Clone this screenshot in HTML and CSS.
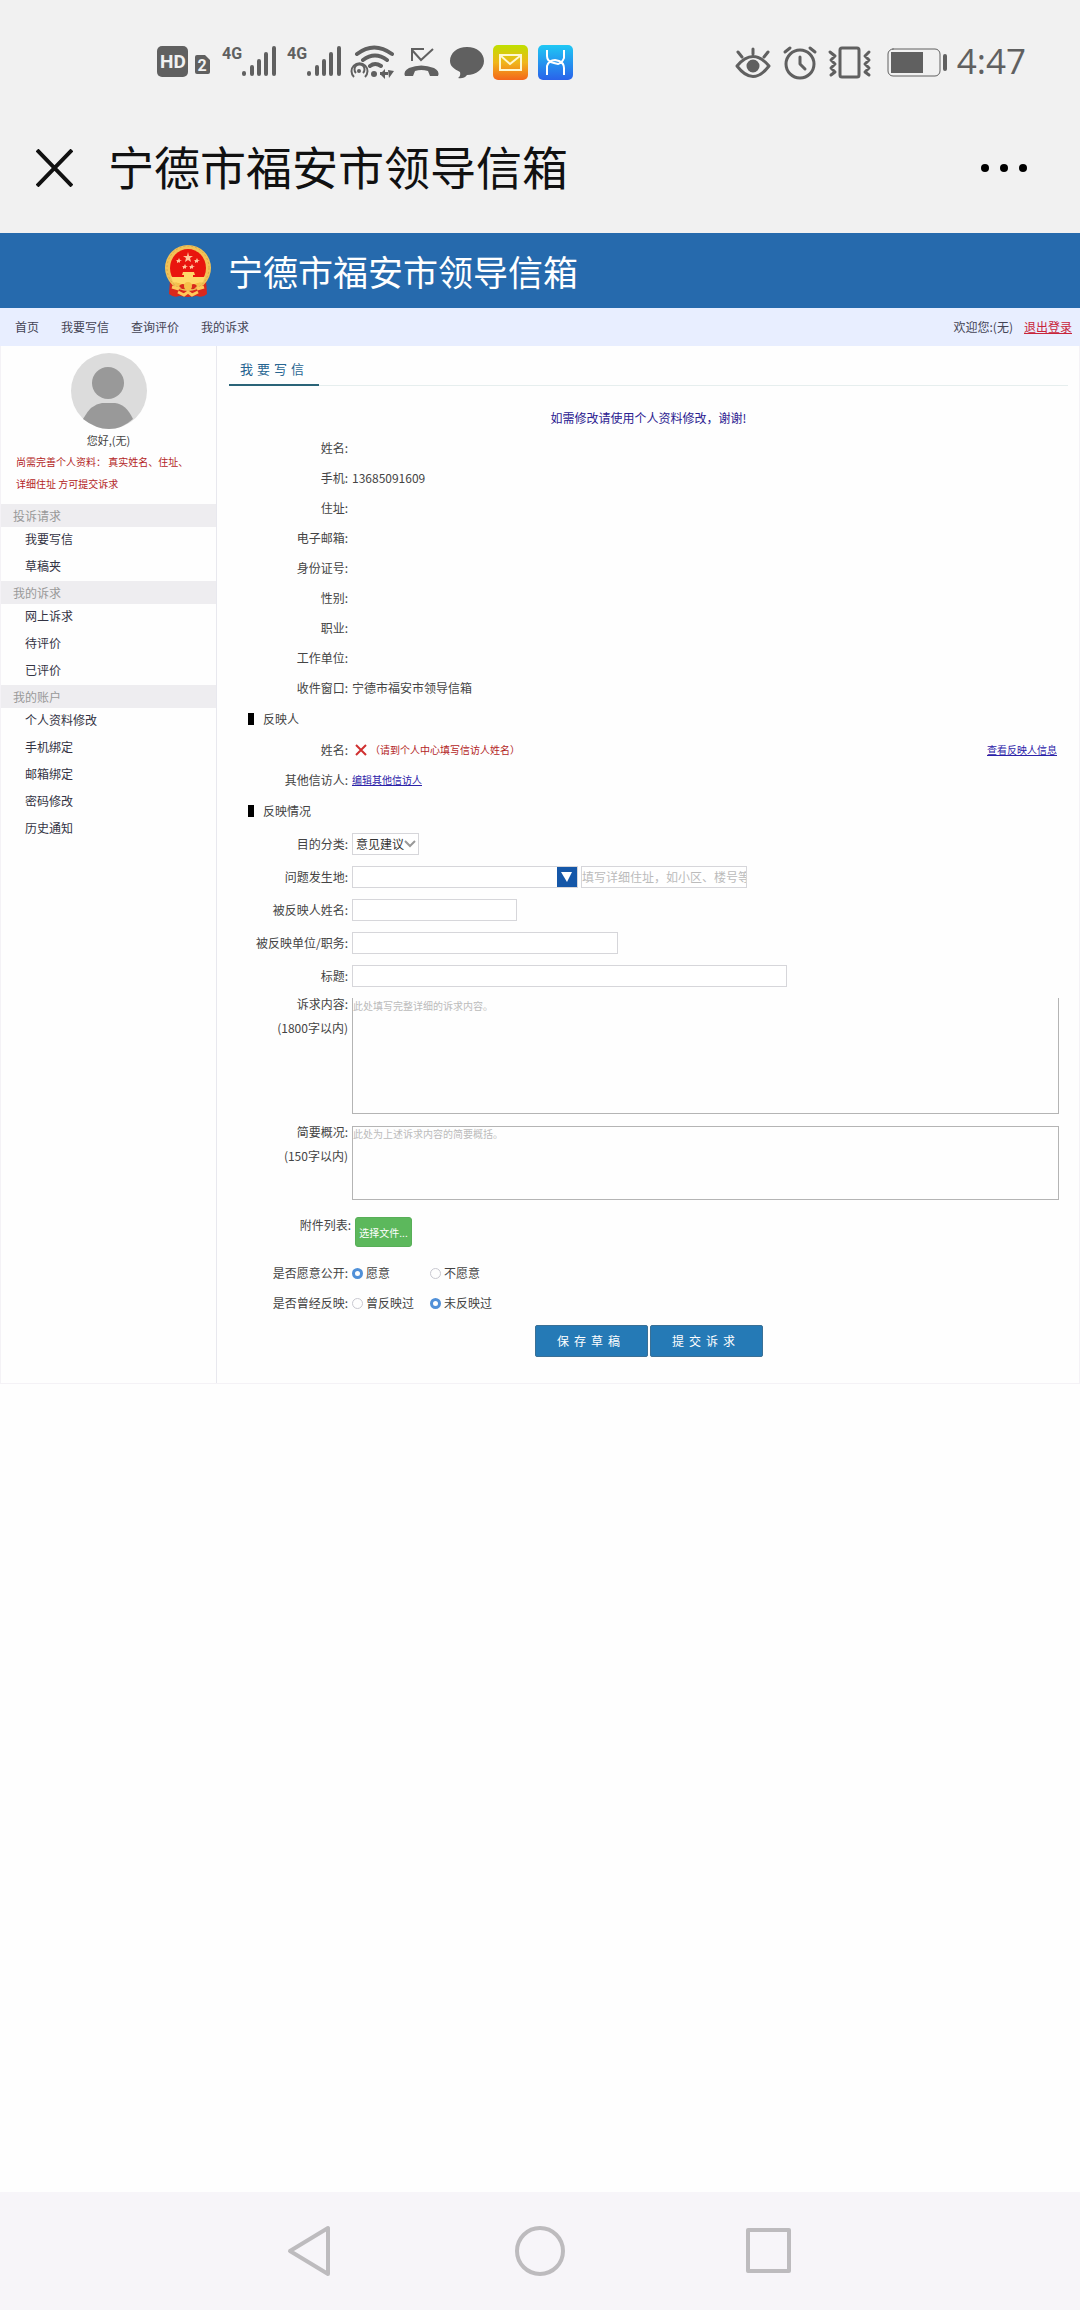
FILE: index.html
```html
<!DOCTYPE html>
<html lang="zh-CN">
<head>
    <meta charset="UTF-8">
    <meta name="viewport" content="width=device-width, initial-scale=1.0">
    <title>宁德市福安市领导信箱</title>
    <link rel="stylesheet" href="styles.css">
</head>
<body>
    <!-- phone status bar -->
    <div class="status-bar">
        <svg class="status-left" width="420" height="40" viewBox="0 0 420 40" fill="#606060">
            <rect x="1" y="5" width="31" height="31" rx="5"/>
            <text class="hd-text" x="17" y="27">HD</text>
            <path d="M41 14h8l5 5v12q0 2-2 2H41q-2 0-2-2V16q0-2 2-2z"/>
            <text class="sim-text" x="46" y="30">2</text>
            <g id="signal">
                <text class="net-text" x="66" y="18">4G</text>
                <g stroke="#606060" stroke-width="4" stroke-linecap="round">
                    <path d="M88 32v1M96 26v7M103 20v13M110 13v20M118 7v26"/>
                </g>
            </g>
            <use href="#signal" x="65"/>
            <g fill="none" stroke="#606060" stroke-width="4" stroke-linecap="round">
                <path d="M201 13q17-13 35 0M207 19q12-9 24 0M214 25q5-4 11 0"/>
            </g>
            <g fill="none" stroke="#606060" stroke-width="2">
                <path d="M198 36a8 8 0 1 1 11 0M200 32a5 5 0 1 1 7 0"/>
            </g>
            <circle cx="203" cy="30" r="2"/>
            <circle cx="218" cy="33" r="3"/>
            <path d="M224 33l5-5v10M224 31h8v3h-8zM232 29l6 1-5 7z"/>
            <path d="M256 20V8h12M256 9l9 10 12-11" fill="none" stroke="#606060" stroke-width="2"/>
            <path d="M249 35q-2-5 4-8 12-5 25 0 6 3 4 8h-8l-2-5q-7-2-13 0l-2 5z"/>
            <path d="M311 6c10 0 17 6 17 14s-8 14-17 14q-3 4-9 3 3-2 2-6c-6-3-10-6-10-11 0-8 7-14 17-14z"/>
            <defs>
                <linearGradient id="mail" x2="0" y2="1">
                    <stop offset="0" stop-color="#bfe000"/>
                    <stop offset="0.5" stop-color="#f0b61a"/>
                    <stop offset="1" stop-color="#f4661c"/>
                </linearGradient>
                <linearGradient id="link" x2="0" y2="1">
                    <stop offset="0" stop-color="#1fc8f4"/>
                    <stop offset="1" stop-color="#2a62ea"/>
                </linearGradient>
            </defs>
            <rect x="337" y="4" width="35" height="35" rx="5" fill="url(#mail)"/>
            <path d="M344 14h21v15h-21zM345 15l9 8 10-8" fill="none" stroke="#fff8d0" stroke-width="2"/>
            <rect x="382" y="4" width="35" height="35" rx="5" fill="url(#link)"/>
            <path d="M391 9v6q0 6 7 7l4 1q4-1 6-6V9M391 34v-9q2-6 8-6l4 1q5 2 5 7v7" fill="none" stroke="#fff" stroke-width="2"/>
        </svg>
        <div class="status-right">
            <svg width="214" height="40" viewBox="0 0 214 40" fill="none" stroke="#606060" stroke-width="3" stroke-linecap="round" stroke-linejoin="round">
                <path d="M3 25q16-19 32 0-16 21-32 0zM19 13V8M8 16l-4-5M30 16l4-5"/>
                <circle cx="19" cy="25" r="5" fill="#606060"/>
                <circle cx="66" cy="23" r="14"/>
                <path d="M66 16v7l5 5M51 11l5-4M81 11l-5-4"/>
                <rect x="106" y="7" width="19" height="29" rx="2"/>
                <path d="M96 11l5 4-4 4 4 4-4 4 4 4-4 3M135 11l-4 4 4 4-4 4 4 4-4 4 4 3"/>
                <rect x="154" y="8" width="52" height="27" rx="5" stroke-width="1"/>
                <path d="M157 11h32v21h-32z" fill="#606060" stroke="none"/>
                <path d="M211 15v13" stroke-width="4"/>
            </svg>
            <span class="clock">4:47</span>
        </div>
    </div>

    <div class="title-bar">
        <button class="icon-button" aria-label="关闭">
            <svg width="37" height="38" viewBox="0 0 37 38" stroke="#111" stroke-width="4">
                <path d="M1 1l35 36M36 1L1 37"/>
            </svg>
        </button>
        <h1>宁德市福安市领导信箱</h1>
        <button class="icon-button" aria-label="更多">
            <svg width="48" height="10" viewBox="0 0 48 10">
                <circle cx="5" cy="5" r="4"/>
                <circle cx="24" cy="5" r="4"/>
                <circle cx="43" cy="5" r="4"/>
            </svg>
        </button>
    </div>

    <header class="banner">
        <svg width="48" height="54" viewBox="0 0 48 54">
            <path d="M6 36l-1 14q5 4 10 2l9 1 9-1q6 2 10-2l-1-14z" fill="#d9281c"/>
            <ellipse cx="24" cy="24" rx="23" ry="23" fill="#f2c257"/>
            <ellipse cx="24" cy="24" rx="21" ry="22" fill="none" stroke="#dba645" stroke-dasharray="2 2"/>
            <ellipse cx="24" cy="24" rx="18" ry="19" fill="#e9150e"/>
            <path d="M24 8l1 4h4l-3 2 1 4-3-2-3 2 1-4-3-2h4zM15 14l1 2h2l-2 1v2l-1-1-2 1v-2l-1-1h2zM33 14l1 2h2l-2 1v2l-1-1-2 1v-2l-1-1h2zM21 20l1 2h2l-2 1v2l-1-1-2 1v-2l-1-1h2zM28 20l1 2h2l-2 1v2l-1-1-2 1v-2l-1-1h2z" fill="#ffc49a"/>
            <path d="M19 28h11l1 3h-2v2h12l-2 5q-15 6-30 0l-2-5h13v-2h-2z" fill="#ffd868"/>
            <path d="M11 38q13 5 26 0l-4 5H15z" fill="#f6c04a"/>
            <path d="M15 42q4-4 7 0h4q4-4 7 0l-3 3H18z" fill="#d9281c"/>
            <circle cx="24" cy="42" r="4" fill="#f6c04a"/>
            <path d="M8 43l7 2M40 43l-7 2M14 48l6 3 4-3 4 3 6-3" fill="none" stroke="#ffc85a" stroke-width="3"/>
        </svg>
        <h2>宁德市福安市领导信箱</h2>
    </header>

    <nav class="top-nav">
        <a href="#">首页</a>
        <a href="#">我要写信</a>
        <a href="#">查询评价</a>
        <a href="#">我的诉求</a>
        <span class="welcome">欢迎您:(无)</span>
        <a class="logout" href="#">退出登录</a>
    </nav>

    <div class="content">
        <aside class="sidebar">
            <div class="profile">
                <svg width="76" height="76" viewBox="0 0 76 76">
                    <circle cx="38" cy="38" r="38" fill="#dcdcdc"/>
                    <circle cx="37" cy="30" r="16" fill="#999"/>
                    <path d="M12 66Q20 51 31 50h13q11 1 18 16-11 10-24 10T12 66z" fill="#999"/>
                </svg>
                <p>您好,(无)</p>
            </div>
            <p class="warning">尚需完善个人资料： 真实姓名、住址、<br>详细住址 方可提交诉求</p>
            <h3>投诉请求</h3>
            <ul>
                <li><a href="#">我要写信</a></li>
                <li><a href="#">草稿夹</a></li>
            </ul>
            <h3>我的诉求</h3>
            <ul>
                <li><a href="#">网上诉求</a></li>
                <li><a href="#">待评价</a></li>
                <li><a href="#">已评价</a></li>
            </ul>
            <h3>我的账户</h3>
            <ul>
                <li><a href="#">个人资料修改</a></li>
                <li><a href="#">手机绑定</a></li>
                <li><a href="#">邮箱绑定</a></li>
                <li><a href="#">密码修改</a></li>
                <li><a href="#">历史通知</a></li>
            </ul>
        </aside>

        <main class="main">
            <div class="tabs"><span class="tab">我要写信</span></div>
            <p class="notice">如需修改请使用个人资料修改，谢谢!</p>

            <form>
                <dl>
                    <div class="row"><dt>姓名:</dt><dd></dd></div>
                    <div class="row"><dt>手机:</dt><dd>13685091609</dd></div>
                    <div class="row"><dt>住址:</dt><dd></dd></div>
                    <div class="row"><dt>电子邮箱:</dt><dd></dd></div>
                    <div class="row"><dt>身份证号:</dt><dd></dd></div>
                    <div class="row"><dt>性别:</dt><dd></dd></div>
                    <div class="row"><dt>职业:</dt><dd></dd></div>
                    <div class="row"><dt>工作单位:</dt><dd></dd></div>
                    <div class="row"><dt>收件窗口:</dt><dd>宁德市福安市领导信箱</dd></div>
                </dl>

                <h4>反映人</h4>
                <div class="row">
                    <span>姓名:</span>
                    <div class="field">
                        <svg class="cross" width="12" height="12" viewBox="0 0 12 12" stroke="#d03030" stroke-width="2">
                            <path d="M1 1l10 10M11 1L1 11"/>
                        </svg>
                        <span class="error">（请到个人中心填写信访人姓名）</span>
                        <a class="small-link view-link" href="#">查看反映人信息</a>
                    </div>
                </div>
                <div class="row">
                    <span>其他信访人:</span>
                    <div class="field"><a class="small-link" href="#">编辑其他信访人</a></div>
                </div>

                <h4>反映情况</h4>
                <div class="row input-row">
                    <label for="purpose">目的分类:</label>
                    <div class="select-wrap">
                        <select id="purpose"><option>意见建议</option></select>
                        <svg width="12" height="8" viewBox="0 0 12 8" fill="none" stroke="#999" stroke-width="2">
                            <path d="M1 1l5 5 5-5"/>
                        </svg>
                    </div>
                </div>
                <div class="row input-row">
                    <label for="area">问题发生地:</label>
                    <div class="field">
                        <div class="picker">
                            <input id="area" type="text">
                            <button type="button" aria-label="选择地区">
                                <svg width="11" height="10" viewBox="0 0 11 10" fill="#fff"><path d="M0 0h11L6 10z"/></svg>
                            </button>
                        </div>
                        <input class="address" type="text" aria-label="详细住址" placeholder="填写详细住址，如小区、楼号等">
                    </div>
                </div>
                <div class="row input-row">
                    <label for="person">被反映人姓名:</label>
                    <div class="field"><input id="person" class="short" type="text"></div>
                </div>
                <div class="row input-row">
                    <label for="unit">被反映单位/职务:</label>
                    <div class="field"><input id="unit" class="medium" type="text"></div>
                </div>
                <div class="row input-row">
                    <label for="subject">标题:</label>
                    <div class="field"><input id="subject" class="long" type="text"></div>
                </div>
                <div class="row text-row">
                    <label for="detail">诉求内容:<br>(1800字以内)</label>
                    <textarea id="detail" class="detail" placeholder="此处填写完整详细的诉求内容。"></textarea>
                </div>
                <div class="row text-row">
                    <label for="summary">简要概况:<br>(150字以内)</label>
                    <textarea id="summary" placeholder="此处为上述诉求内容的简要概括。"></textarea>
                </div>
                <div class="row file-row">
                    <span>附件列表:</span>
                    <div class="field"><button type="button" class="file-button">选择文件...</button></div>
                </div>
                <div class="row">
                    <span>是否愿意公开:</span>
                    <div class="field">
                        <label class="choice"><input type="radio" name="open" checked>愿意</label>
                        <label class="choice"><input type="radio" name="open">不愿意</label>
                    </div>
                </div>
                <div class="row">
                    <span>是否曾经反映:</span>
                    <div class="field">
                        <label class="choice"><input type="radio" name="before">曾反映过</label>
                        <label class="choice"><input type="radio" name="before" checked>未反映过</label>
                    </div>
                </div>
                <div class="actions">
                    <button type="button">保存草稿</button>
                    <button type="submit">提交诉求</button>
                </div>
            </form>
        </main>
    </div>

    <!-- phone navigation keys -->
    <footer class="phone-nav">
        <button class="icon-button" aria-label="返回">
            <svg width="52" height="52" viewBox="0 0 52 52"><path d="M43 3v46L5 26z"/></svg>
        </button>
        <button class="icon-button" aria-label="主页">
            <svg width="52" height="52" viewBox="0 0 52 52"><circle cx="26" cy="26" r="23"/></svg>
        </button>
        <button class="icon-button" aria-label="最近任务">
            <svg width="52" height="52" viewBox="0 0 52 52"><rect x="5" y="5" width="41" height="41"/></svg>
        </button>
    </footer>
</body>
</html>
```
FILE: styles.css
```css
* {
    margin: 0;
    padding: 0;
    box-sizing: border-box;
}

body {
    min-height: 100vh;
    display: flex;
    flex-direction: column;
    background-color: #fefefe;
    color: #444;
    font-family: "Noto Sans CJK SC", sans-serif;
    font-size: 12px;
}

input,
select,
textarea,
button {
    font-family: inherit;
    font-size: 12px;
}

svg {
    display: block;
    flex-shrink: 0;
}

ul {
    list-style-type: none;
}

a {
    color: inherit;
    text-decoration: none;
}

.icon-button {
    background: none;
    border: none;
    cursor: pointer;
}

/* Status bar */
.status-bar {
    height: 122px;
    padding: 0 54px 0 156px;
    display: flex;
    justify-content: space-between;
    align-items: center;
    background-color: #f1f1f1;
}

.hd-text,
.sim-text {
    fill: #f1f1f1;
    font: bold 19px Roboto, sans-serif;
    text-anchor: middle;
}

.sim-text {
    font-size: 16px;
}

.net-text {
    font: bold 16px "Liberation Sans Narrow", Roboto, sans-serif;
}

.status-right {
    display: flex;
    align-items: center;
    gap: 9px;
}

.clock {
    color: #606060;
    font-family: "Open Sans", "Noto Sans", sans-serif;
    font-size: 35px;
    font-weight: 400;
    line-height: 40px;
}

/* Title bar */
.title-bar {
    height: 111px;
    padding: 0 52px 20px 36px;
    display: flex;
    align-items: center;
    background-color: #f1f1f1;
}

.title-bar h1 {
    flex: 1;
    margin-left: 35px;
    padding-bottom: 6px;
    color: #111;
    font-size: 46px;
    font-weight: 400;
    line-height: 60px;
}

/* Site header */
.banner {
    height: 75px;
    padding-left: 164px;
    display: flex;
    align-items: center;
    gap: 16px;
    background-color: #266aad;
}

.banner h2 {
    color: #fff;
    font-size: 35px;
    font-weight: 400;
    line-height: 50px;
}

.top-nav {
    height: 38px;
    padding: 0 8px 1px 15px;
    display: flex;
    align-items: center;
    gap: 22px;
    background-color: #e8eeff;
    color: #445;
}

.welcome {
    margin-left: auto;
}

.logout {
    margin-left: -11px;
    color: #c8253a;
    text-decoration: underline;
}

.content {
    display: flex;
    border: 1px solid #f4f2f6;
    border-top: none;
}

/* Sidebar */
.sidebar {
    width: 216px;
    border-right: 1px solid #e8e8ee;
}

.profile {
    padding-top: 7px;
    display: flex;
    flex-direction: column;
    align-items: center;
}

.profile p {
    font-size: 11px;
    line-height: 22px;
}

.warning {
    padding: 0 0 9px 15px;
    color: #b32525;
    font-size: 10px;
    line-height: 22px;
    white-space: nowrap;
}

.sidebar h3 {
    padding-left: 12px;
    background-color: #eeedf0;
    color: #999;
    font-size: 12px;
    font-weight: 400;
    line-height: 23px;
}

.sidebar li {
    padding: 0 0 4px 24px;
    color: #334;
    line-height: 23px;
}

/* Letter form */
.main {
    flex: 1;
    padding: 8px 11px 26px 12px;
}

.tabs {
    border-bottom: 1px solid #e6eeee;
    display: flex;
}

.tab {
    margin-bottom: -1px;
    padding: 0 11px 0 11px;
    border-bottom: 2px solid #2a6478;
    color: #276591;
    font-size: 13px;
    letter-spacing: 4px;
    line-height: 30px;
}

.notice {
    margin-top: 17px;
    color: #2b2090;
    line-height: 30px;
    text-align: center;
}

.row {
    display: grid;
    grid-template-columns: 119px 1fr;
    column-gap: 4px;
    line-height: 30px;
}

.row > :first-child {
    text-align: right;
}

.field {
    display: flex;
    align-items: center;
}

h4 {
    padding-left: 19px;
    display: flex;
    align-items: center;
    gap: 9px;
    font-size: 12px;
    font-weight: 400;
    line-height: 32px;
}

h4::before {
    content: "";
    width: 6px;
    height: 12px;
    background-color: #000;
}

.cross {
    margin-left: 3px;
}

.error {
    margin-left: 3px;
    color: #b32525;
    font-size: 10px;
}

.small-link {
    color: #2c22a8;
    font-size: 10px;
    text-decoration: underline;
}

.view-link {
    margin-left: auto;
    margin-right: 11px;
}

.input-row {
    height: 33px;
    align-items: center;
}

input[type="text"],
select {
    height: 22px;
    border: 1px solid #d6d6da;
    background-color: #fff;
}

.select-wrap {
    position: relative;
    width: 67px;
    height: 22px;
}

select {
    display: block;
    width: 100%;
    padding-left: 3px;
    appearance: none;
    color: #333;
}

.select-wrap svg {
    position: absolute;
    top: 7px;
    right: 3px;
}

.picker {
    display: flex;
    width: 226px;
    height: 22px;
    border: 1px solid #d6d6da;
}

.picker input[type="text"] {
    flex: 1;
    min-width: 0;
    height: 20px;
    border: none;
}

.picker button {
    width: 20px;
    padding-left: 4px;
    border: none;
    background-color: #1557a8;
}

.address {
    width: 166px;
    margin-left: 3px;
}

.short {
    width: 165px;
}

.medium {
    width: 266px;
}

.long {
    width: 435px;
}

::placeholder {
    color: #bbb;
}

.text-row {
    padding-bottom: 5px;
    line-height: 24px;
}

textarea {
    height: 74px;
    margin: 6px 9px 0 0;
    border: 1px solid #b4b4b4;
    background-color: #fefefe;
    font-size: 10px;
    line-height: 14px;
    resize: none;
}

.detail {
    height: 116px;
    margin-bottom: 1px;
    padding-top: 1px;
    border-top: none;
}

.file-row {
    grid-template-columns: 122px 1fr;
    padding: 8px 0 11px;
    line-height: 24px;
}

.file-button {
    width: 57px;
    height: 30px;
    margin-top: 4px;
    border: 1px solid #58ae58;
    border-radius: 3px;
    background-color: #5cb85c;
    color: #fff;
    font-size: 10px;
}

.choice {
    min-width: 78px;
    display: flex;
    align-items: center;
    gap: 3px;
}

input[type="radio"] {
    width: 11px;
    height: 11px;
    appearance: none;
    border: 1px solid #c8c8d0;
    border-radius: 50%;
}

input[type="radio"]:checked {
    border: 3px solid #5090d8;
}

.actions {
    margin-top: 7px;
    display: flex;
    justify-content: center;
    gap: 2px;
}

.actions button {
    width: 113px;
    height: 32px;
    padding-bottom: 2px;
    border: 1px solid #3a7096;
    border-radius: 2px;
    background-color: #257ab6;
    color: #fff;
    letter-spacing: 5px;
}

/* Phone navigation */
.phone-nav {
    height: 118px;
    margin-top: auto;
    padding-bottom: 1px;
    display: flex;
    justify-content: center;
    align-items: center;
    gap: 177px;
    background-color: #f7f5f9;
}

.phone-nav svg {
    fill: none;
    stroke: #bdbbbe;
    stroke-width: 4;
    stroke-linejoin: round;
}
```
